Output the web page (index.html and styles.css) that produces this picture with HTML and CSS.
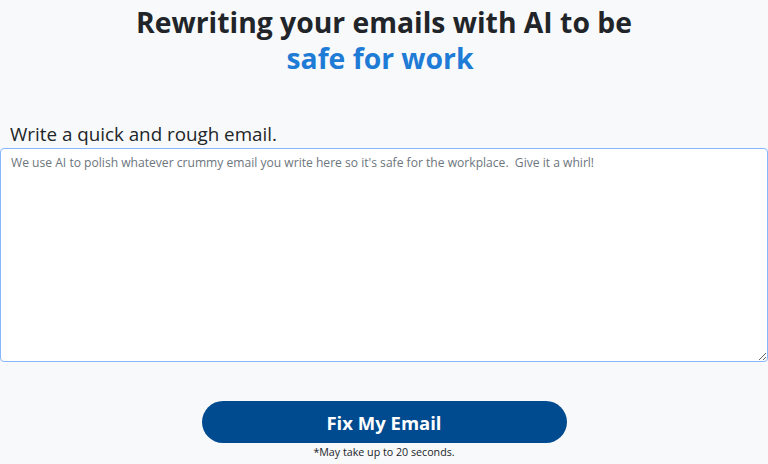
FILE: index.html
```html
<!DOCTYPE html>
<html>
<head>
<meta charset="utf-8">
<link rel="stylesheet" href="styles.css">
</head>
<body>
<main class="page">
  <h1 class="title">Rewriting your emails with AI to be<br><span class="accent">safe for work</span></h1>
  <label class="label" for="email">Write a quick and rough email.</label>
  <textarea id="email" class="input" placeholder="We use AI to polish whatever crummy email you write here so it's safe for the workplace.  Give it a whirl!"></textarea>
  <div class="actions">
    <button class="btn">Fix My Email</button>
    <p class="note">*May take up to 20 seconds.</p>
  </div>
</main>
</body>
</html>
```

FILE: styles.css
```css
html, body {
  margin: 0;
  padding: 0;
  background: #f8f9fa;
  font-family: "Open Sans", "Noto Sans", sans-serif;
  color: #212529;
}
.page {
  display: flex;
  flex-direction: column;
}
.title {
  margin: 4px 0 0;
  text-align: center;
  font-size: 28.3px;
  line-height: 36px;
  font-weight: 700;
  color: #212529;
}
.accent {
  color: #1e7bd6;
  padding-right: 8px;
}
.label {
  margin-top: 46px;
  padding-left: 10px;
  font-size: 18.8px;
  line-height: 24px;
  color: #212529;
}
.input {
  box-sizing: border-box;
  margin: 2px 0 0;
  width: 768px;
  height: 214px;
  border: 1px solid #86b7fe;
  border-radius: 4px;
  background: #fff;
  padding: 5px 10px;
  font-family: "Open Sans", "Noto Sans", sans-serif;
  font-size: 12.1px;
  line-height: 18px;
  resize: vertical;
  outline: none;
}
.input::placeholder {
  color: #6c757d;
}
.actions {
  display: flex;
  flex-direction: column;
  align-items: center;
  margin-top: 39px;
}
.btn {
  width: 365px;
  height: 42px;
  border: none;
  border-radius: 21px;
  background: #004a8f;
  color: #fff;
  font-family: "Open Sans", "Noto Sans", sans-serif;
  font-size: 18.5px;
  font-weight: 700;
}
.note {
  margin: 1px 0 0;
  font-size: 10.7px;
  line-height: 16px;
  color: #212529;
}
```
